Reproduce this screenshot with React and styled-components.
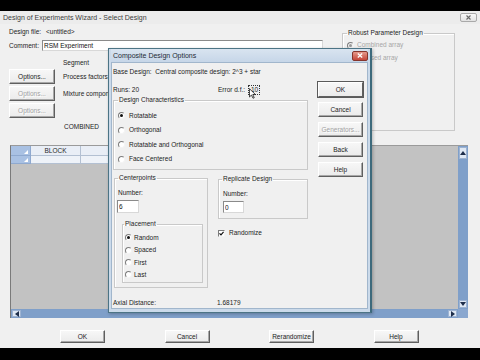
import React from 'react'
import styled, { createGlobalStyle } from 'styled-components'

const GlobalStyle = createGlobalStyle`
  html, body {
    margin: 0;
    padding: 0;
    background: #000;
  }
  body {
    width: 480px;
    height: 360px;
    overflow: hidden;
    font-family: "Liberation Sans", Arial, sans-serif;
  }
`

const Screen = styled.div`
  width: 480px;
  height: 360px;
  display: flex;
  flex-direction: column;
  background: #000;
`

const BlackBar = styled.div`
  flex: none;
  height: ${p => p.$h}px;
  background: #000;
`

// Main wizard window
const Window = styled.div`
  position: relative;
  flex: none;
  height: 337px;
  background: #f0f0f0;
  display: flex;
  flex-direction: column;
  font-size: 6.5px;
  line-height: 8px;
  color: #1c1c1c;
`

const WinTitle = styled.div`
  height: 13px;
  display: flex;
  align-items: center;
  justify-content: space-between;
  padding: 0 3px;
  font-size: 7px;
  color: #3c3c3c;
  background: #ececec;
`

const WinClose = styled.div`
  width: 17px;
  height: 9px;
  box-sizing: border-box;
  border: 1px solid #a9a9a9;
  border-radius: 2px;
  background: linear-gradient(#f8f8f8, #e2e2e2);
  display: flex;
  align-items: center;
  justify-content: center;
`

const WinBody = styled.div`
  padding: 0 12px 0 9px;
  display: flex;
  flex-direction: column;
`

const TopArea = styled.div`
  display: flex;
  gap: 19px;
  margin-top: 4px;
`

const LeftCol = styled.div`
  width: 314px;
  display: flex;
  flex-direction: column;
`

const FieldRow = styled.div`
  display: flex;
  align-items: center;
  height: ${p => p.$h || 8}px;
  margin-top: ${p => p.$mt || 0}px;
  white-space: nowrap;
`

const FieldLabel = styled.span`
  flex: none;
  width: ${p => p.$w}px;
`

const TextBox = styled.input`
  box-sizing: border-box;
  width: ${p => p.$w}px;
  height: ${p => p.$h || 11}px;
  margin: 0;
  padding: 0 1px;
  border: 1px solid;
  border-color: #8a8a8a #d8d8d8 #d8d8d8 #8a8a8a;
  background: #fff;
  font: inherit;
  color: #111;
  outline: none;
`

const SegmentGrid = styled.div`
  display: grid;
  grid-template-columns: 46px auto;
  grid-template-rows: 9px 15px 15px 15px 11px;
  column-gap: 8px;
  row-gap: 2px;
  margin-top: 7px;
`

const Caption = styled.span`
  align-self: ${p => (p.$end ? 'end' : 'center')};
  padding-left: ${p => (p.$end ? 1 : 0)}px;
  white-space: nowrap;
`

const Button = styled.button`
  box-sizing: border-box;
  width: ${p => p.$w || 45}px;
  height: ${p => p.$h || 15}px;
  margin: 0;
  padding: 0;
  font: inherit;
  color: ${p => (p.disabled ? '#a2a2a2' : '#1c1c1c')};
  text-shadow: ${p => (p.disabled ? '1px 1px 0 #fff' : 'none')};
  background: linear-gradient(#f7f7f7, #ebebeb);
  border: 1px solid;
  border-color: #fff #5f5f5f #5f5f5f #fff;
  box-shadow: ${p => (p.$default ? '0 0 0 1px #5a5a5a' : 'inset -1px -1px 0 #a8a8a8')};
`

// Group boxes
const GroupBox = styled.fieldset`
  box-sizing: border-box;
  width: ${p => p.$w}px;
  min-width: 0;
  margin: ${p => p.$m || '0'};
  padding: ${p => p.$pad};
  border: 1px solid #c9c9c9;
  box-shadow: inset 1px 1px 0 #fff;
  display: flex;
  flex-direction: column;

  > legend {
    padding: 0 1px;
    margin-left: ${p => p.$lm || 0}px;
    line-height: 8px;
    white-space: nowrap;
  }
`

const OptionRow = styled.div`
  display: flex;
  align-items: center;
  gap: ${p => p.$gap || 4}px;
  height: ${p => p.$h}px;
  margin-top: ${p => p.$mt || 0}px;
  color: ${p => (p.$disabled ? '#a6a6a6' : 'inherit')};
  white-space: nowrap;
`

const RadioDot = styled.span`
  flex: none;
  box-sizing: border-box;
  width: 7px;
  height: 7px;
  border-radius: 50%;
  border: 1px solid;
  border-color: #7c7c7c #f4f4f4 #f4f4f4 #7c7c7c;
  background: ${p => (p.$disabled ? '#f0f0f0' : '#fff')};
  display: flex;
  align-items: center;
  justify-content: center;

  &::after {
    content: '';
    display: ${p => (p.$checked ? 'block' : 'none')};
    width: 3px;
    height: 3px;
    border-radius: 50%;
    background: ${p => (p.$disabled ? '#9a9a9a' : '#111')};
  }
`

const CheckBox = styled.span`
  flex: none;
  box-sizing: border-box;
  width: 7px;
  height: 7px;
  border: 1px solid;
  border-color: #7c7c7c #f4f4f4 #f4f4f4 #7c7c7c;
  background: #fff;
  display: flex;
  align-items: center;
  justify-content: center;
`

// Worksheet grid
const Sheet = styled.div`
  box-sizing: border-box;
  margin: 14px 0 0 1px;
  width: 458px;
  height: 173px;
  border-top: 1px solid #9a9a9a;
  border-left: 1px solid #7a7a7a;
  display: grid;
  grid-template-columns: 1fr 10px;
  grid-template-rows: 1fr 9px;
`

const SheetArea = styled.div`
  background: #c2c2c2;
  overflow: hidden;
  display: flex;
  flex-direction: column;
`

const SheetRow = styled.div`
  display: flex;
  height: ${p => p.$h}px;
`

const CornerCell = styled.div`
  box-sizing: border-box;
  width: 20px;
  background: #a9c1e3;
  border-right: 1px solid #8fa9cf;
  border-bottom: 1px solid #8fa9cf;
  display: flex;
  align-items: flex-end;
  justify-content: flex-end;
  padding: 0 2px 1px 0;
`

const Cell = styled.div`
  box-sizing: border-box;
  width: ${p => p.$w}px;
  background: ${p => (p.$head ? '#e9eef6' : '#eef2f8')};
  border-right: 1px solid #b3c0d2;
  border-bottom: 1px solid #b3c0d2;
  text-align: center;
  line-height: 9px;
  color: #2a2a2a;
`

const ScrollBar = styled.div`
  background: #7f9fc9;
  display: flex;
  flex-direction: ${p => (p.$vertical ? 'column' : 'row')};
  justify-content: space-between;
  align-items: center;
  padding: 1px;
`

const ScrollCorner = styled.div`
  background: #8aa7cf;
`

const ArrowBtn = styled.div`
  box-sizing: border-box;
  width: ${p => p.$w}px;
  height: ${p => p.$h}px;
  background: #dfe8f4;
  border: 1px solid #9db3d2;
  display: flex;
  align-items: center;
  justify-content: center;
`

const Footer = styled.div`
  display: flex;
  gap: 59.5px;
  padding-left: 51px;
  margin-top: 12px;
`

// Composite Design Options dialog (floats over the wizard)
const Dialog = styled.div`
  position: absolute;
  left: 108px;
  top: 37px;
  width: 264px;
  height: 265px;
  box-sizing: border-box;
  border: 1px solid #4c7485;
  border-right: 2px solid #3d6a7c;
  background: #cbdaea;
  padding: 0 2px 3px;
  display: flex;
  flex-direction: column;
  box-shadow: 1px 1px 3px rgba(0, 0, 0, 0.25);
`

const DlgTitle = styled.div`
  height: 13px;
  flex: none;
  display: flex;
  align-items: center;
  justify-content: space-between;
  padding-left: 2px;
  font-size: 7px;
  color: #1e2a36;
  background: linear-gradient(#d9e4f0, #c6d6e8);
`

const DlgClose = styled.div`
  width: 16px;
  height: 10px;
  box-sizing: border-box;
  border: 1px solid #86352d;
  border-radius: 2px;
  background: linear-gradient(#e69a8c, #c4463a);
  display: flex;
  align-items: center;
  justify-content: center;
`

const DlgBody = styled.div`
  flex: 1;
  background: #f0f0f0;
  border: 1px solid #a1b6cc;
  padding: 5px 4px 0 1px;
  display: flex;
  flex-direction: column;
`

const DlgMain = styled.div`
  display: flex;
  gap: 10px;
  margin-top: 6px;
`

const DlgLeft = styled.div`
  width: 195px;
  display: flex;
  flex-direction: column;
`

const ButtonStack = styled.div`
  display: flex;
  flex-direction: column;
  gap: 5px;
`

const ValueSlot = styled.span`
  position: relative;
  flex: none;
  width: 12px;
  height: 10px;
  margin: -1px 0;
`

const FocusValue = styled.span`
  display: block;
  box-sizing: border-box;
  width: 12px;
  height: 10px;
  border: 1px dotted #333;
  padding-left: 2px;
  line-height: 8px;
`

const Cursor = styled.svg`
  position: absolute;
  left: 1px;
  top: 3px;
`

const LowerRow = styled.div`
  display: flex;
  gap: 10px;
  margin-top: 4px;
`

const SideCol = styled.div`
  display: flex;
  flex-direction: column;
`

const Label = styled.span`
  display: block;
  height: 8px;
  margin-left: ${p => p.$ml || 0}px;
`

const Tri = ({ dir }) => {
  const pts = {
    up: '0,4 3,0 6,4',
    down: '0,0 6,0 3,4',
    left: '4,0 4,6 0,3',
    right: '0,0 0,6 4,3',
  }[dir]
  const vertical = dir === 'up' || dir === 'down'
  return (
    <svg width={vertical ? 6 : 4} height={vertical ? 4 : 6}>
      <polygon points={pts} fill="#1d2d4a" />
    </svg>
  )
}

const Radio = ({ checked, disabled, gap, h, children }) => (
  <OptionRow $gap={gap} $h={h} $disabled={disabled}>
    <RadioDot $checked={checked} $disabled={disabled} />
    <span>{children}</span>
  </OptionRow>
)

const RowHandle = () => (
  <CornerCell>
    <svg width="4" height="4"><polygon points="4,0 4,4 0,4" fill="#fff" /></svg>
  </CornerCell>
)

export default function App() {
  return (
    <>
      <GlobalStyle />
      <Screen>
        <BlackBar $h={11} />
        <Window>
          <WinTitle>
            <span>Design of Experiments Wizard - Select Design</span>
            <WinClose>
              <svg width="5" height="5">
                <path d="M0.5 0.5 L4.5 4.5 M4.5 0.5 L0.5 4.5" stroke="#6b6b6b" strokeWidth="1.1" />
              </svg>
            </WinClose>
          </WinTitle>

          <WinBody>
            <TopArea>
              <LeftCol>
                <FieldRow>
                  <FieldLabel $w={37}>Design file:</FieldLabel>
                  <span>&lt;untitled&gt;</span>
                </FieldRow>
                <FieldRow $h={11} $mt={4}>
                  <FieldLabel $w={33}>Comment:</FieldLabel>
                  <TextBox $w={281} readOnly value="RSM Experiment" />
                </FieldRow>
                <SegmentGrid>
                  <span />
                  <Caption>Segment</Caption>
                  <Button $w={46}>Options...</Button>
                  <Caption>Process factors</Caption>
                  <Button $w={46} disabled>Options...</Button>
                  <Caption>Mixture components</Caption>
                  <Button $w={46} disabled>Options...</Button>
                  <span />
                  <span />
                  <Caption $end>COMBINED</Caption>
                </SegmentGrid>
              </LeftCol>

              <GroupBox $w={113} $m="1px 0 0" $pad="1.5px 2px 2.5px 4px" $lm={0}>
                <legend>Robust Parameter Design</legend>
                <Radio h={13} gap={3} checked disabled>Combined array</Radio>
                <Radio h={13} gap={3} disabled>Crossed array</Radio>
              </GroupBox>
            </TopArea>

            <Sheet>
              <SheetArea>
                <SheetRow $h={10}>
                  <RowHandle />
                  <Cell $w={50} $head>BLOCK</Cell>
                  <Cell $w={150} $head />
                </SheetRow>
                <SheetRow $h={8}>
                  <RowHandle />
                  <Cell $w={50} />
                  <Cell $w={150} />
                </SheetRow>
              </SheetArea>
              <ScrollBar $vertical>
                <ArrowBtn $w={8} $h={12}><Tri dir="up" /></ArrowBtn>
                <ArrowBtn $w={8} $h={8}><Tri dir="down" /></ArrowBtn>
              </ScrollBar>
              <ScrollBar>
                <ArrowBtn $w={9} $h={7}><Tri dir="left" /></ArrowBtn>
                <ArrowBtn $w={9} $h={7}><Tri dir="right" /></ArrowBtn>
              </ScrollBar>
              <ScrollCorner />
            </Sheet>

            <Footer>
              <Button $h={13}>OK</Button>
              <Button $h={13}>Cancel</Button>
              <Button $h={13}>Rerandomize</Button>
              <Button $h={13}>Help</Button>
            </Footer>
          </WinBody>

          <Dialog>
            <DlgTitle>
              <span>Composite Design Options</span>
              <DlgClose>
                <svg width="6" height="5">
                  <path d="M0.8 0.5 L5.2 4.5 M5.2 0.5 L0.8 4.5" stroke="#fff" strokeWidth="1.3" />
                </svg>
              </DlgClose>
            </DlgTitle>
            <DlgBody>
              <FieldRow>Base Design:&nbsp; Central composite design: 2^3 + star</FieldRow>
              <DlgMain>
                <DlgLeft>
                  <FieldRow $mt={4}>
                    <FieldLabel $w={105}>Runs: 20</FieldLabel>
                    <FieldLabel $w={30}>Error d.f.:</FieldLabel>
                    <ValueSlot>
                      <FocusValue>10</FocusValue>
                      <Cursor width="7" height="11" viewBox="0 0 8 12">
                        <path d="M0.5 0.5 L0.5 10 L2.8 7.8 L4.6 11.4 L6 10.8 L4.3 7.2 L7.4 7.2 Z" fill="#fff" stroke="#111" strokeWidth="0.9" />
                      </Cursor>
                    </ValueSlot>
                  </FieldRow>

                  <GroupBox $w={195} $m="2px 0 0" $pad="4.5px 2px 2.5px 4px" $lm={0}>
                    <legend>Design Characteristics</legend>
                    <Radio h={14.5} checked>Rotatable</Radio>
                    <Radio h={14.5}>Orthogonal</Radio>
                    <Radio h={14.5}>Rotatable and Orthogonal</Radio>
                    <Radio h={14.5}>Face Centered</Radio>
                  </GroupBox>

                  <LowerRow>
                    <GroupBox $w={94} $m="0 0 0 1px" $pad="7px 2px 4px 2px" $lm={1}>
                      <legend>Centerpoints</legend>
                      <Label $ml={1}>Number:</Label>
                      <TextBox $w={22} $h={13} readOnly value="6" style={{ marginTop: 3 }} />
                      <GroupBox $w={81} $m="7px 0 0 5px" $pad="3.85px 2px 1px 2px" $lm={-1}>
                        <legend>Placement</legend>
                        <Radio h={12.3} gap={2} checked>Random</Radio>
                        <Radio h={12.3} gap={2}>Spaced</Radio>
                        <Radio h={12.3} gap={2}>First</Radio>
                        <Radio h={12.3} gap={2}>Last</Radio>
                      </GroupBox>
                    </GroupBox>

                    <SideCol>
                      <GroupBox $w={90} $m="1px 0 0" $pad="7px 2px 5px 4px" $lm={-1}>
                        <legend>Replicate Design</legend>
                        <Label>Number:</Label>
                        <TextBox $w={21} $h={12} readOnly value="0" style={{ marginTop: 3 }} />
                      </GroupBox>
                      <OptionRow $h={8} $gap={4} $mt={10}>
                        <CheckBox>
                          <svg width="5" height="5">
                            <path d="M0.5 2.3 L2 3.9 L4.6 0.8" fill="none" stroke="#111" strokeWidth="1.2" />
                          </svg>
                        </CheckBox>
                        <span>Randomize</span>
                      </OptionRow>
                    </SideCol>
                  </LowerRow>

                  <FieldRow $mt={11}>
                    <FieldLabel $w={104}>Axial Distance:</FieldLabel>
                    <span>1.68179</span>
                  </FieldRow>
                </DlgLeft>

                <ButtonStack>
                  <Button $default>OK</Button>
                  <Button>Cancel</Button>
                  <Button disabled>Generators...</Button>
                  <Button>Back</Button>
                  <Button>Help</Button>
                </ButtonStack>
              </DlgMain>
            </DlgBody>
          </Dialog>
        </Window>
        <BlackBar $h={12} />
      </Screen>
    </>
  )
}
